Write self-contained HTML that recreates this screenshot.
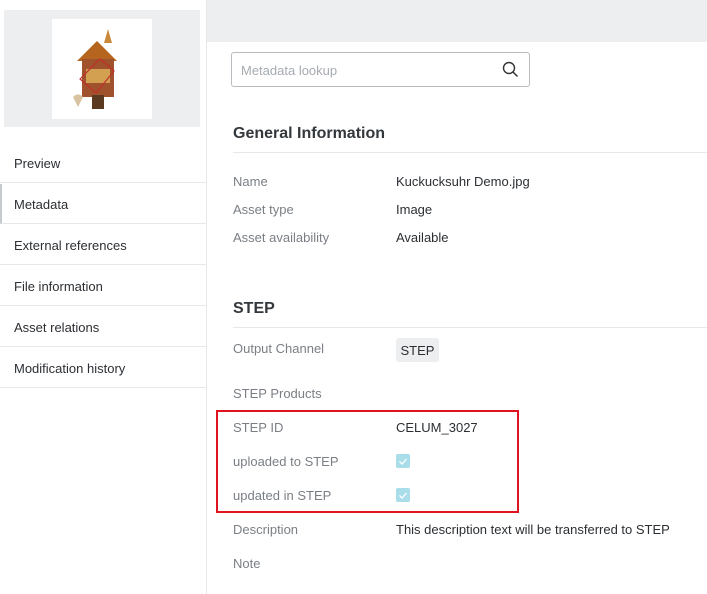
<!DOCTYPE html><html><head><style>
body{margin:0;width:707px;height:594px;position:relative;font-family:"Liberation Sans",sans-serif;font-size:13px;color:#2b2f33;background:#fff;overflow:hidden}
.a{position:absolute}
.side{left:0;top:0;width:206px;height:594px;border-right:1px solid #e6e8ea}
.nav{left:0;width:206px;height:40px;border-bottom:1px solid #e6e8ea;line-height:42px;padding-left:14px;box-sizing:border-box}
.l{left:233px;color:#7a7f85}
.v{left:396px}
.cb{left:396px;width:14px;height:14px;background:#a8dde9;border-radius:2px}
</style></head><body>
<div class="a side"></div>
<div class="a" style="left:4px;top:10px;width:196px;height:117px;background:#eceef0"></div>
<div class="a" style="left:52px;top:19px;width:100px;height:100px;background:#fff">
<svg width="100" height="100" viewBox="0 0 100 100">
<polygon points="25,42 45,22 65,42" fill="#b5651d"/>
<rect x="30" y="40" width="32" height="38" fill="#a0522d"/>
<rect x="34" y="50" width="24" height="14" fill="#d2a050"/>
<rect x="40" y="76" width="12" height="14" fill="#5a3a20"/>
<polygon points="56,10 60,24 52,24" fill="#c98a3a"/>
<path d="M28 60 L48 40 L62 52 L44 74 Z" fill="none" stroke="#c0302a" stroke-width="1.2"/>
<path d="M21 78 q5-5 10 0 l-5 10z" fill="#d9c2a0"/>
</svg></div>
<div class="a nav" style="top:143px">Preview</div>
<div class="a nav" style="top:184px;border-left:2px solid #c8cbce;padding-left:12px">Metadata</div>
<div class="a nav" style="top:225px">External references</div>
<div class="a nav" style="top:266px">File information</div>
<div class="a nav" style="top:307px">Asset relations</div>
<div class="a nav" style="top:348px">Modification history</div>
<div class="a" style="left:207px;top:0;width:500px;height:42px;background:#eceef0"></div>
<div class="a" style="left:231px;top:52px;width:299px;height:35px;border:1px solid #b8bcc0;border-radius:3px;box-sizing:border-box;line-height:35px;padding-left:9px;color:#a6abb0;font-size:13px">Metadata lookup</div>
<svg class="a" style="left:502px;top:61px" width="17" height="17" viewBox="0 0 17 17"><circle cx="7" cy="7" r="5.5" fill="none" stroke="#333" stroke-width="1.4"/><path d="M11 11l4.5 4.5" stroke="#333" stroke-width="1.5"/></svg>
<div class="a" style="left:233px;top:125px;font-size:16px;font-weight:bold;color:#33383d">General Information</div>
<div class="a" style="left:233px;top:152px;width:474px;height:1px;background:#e6e8ea"></div>
<div class="a l" style="top:174px">Name</div><div class="a v" style="top:174px">Kuckucksuhr Demo.jpg</div>
<div class="a l" style="top:202px">Asset type</div><div class="a v" style="top:202px">Image</div>
<div class="a l" style="top:230px">Asset availability</div><div class="a v" style="top:230px">Available</div>
<div class="a" style="left:233px;top:300px;font-size:16px;font-weight:bold;color:#33383d">STEP</div>
<div class="a" style="left:233px;top:327px;width:474px;height:1px;background:#e6e8ea"></div>
<div class="a l" style="top:341px">Output Channel</div>
<div class="a" style="left:396px;top:338px;width:43px;height:24px;background:#eceef0;border-radius:3px;text-align:center;line-height:25px">STEP</div>
<div class="a l" style="top:386px">STEP Products</div>
<div class="a l" style="top:420px">STEP ID</div><div class="a v" style="top:420px">CELUM_3027</div>
<div class="a l" style="top:454px">uploaded to STEP</div><div class="a cb" style="top:454px"><svg width="14" height="14"><path d="M3.5 7.5l2.5 2.5 4.5-5" fill="none" stroke="#fff" stroke-width="1.3"/></svg></div>
<div class="a l" style="top:488px">updated in STEP</div><div class="a cb" style="top:488px"><svg width="14" height="14"><path d="M3.5 7.5l2.5 2.5 4.5-5" fill="none" stroke="#fff" stroke-width="1.3"/></svg></div>
<div class="a" style="left:216px;top:410px;width:303px;height:103px;border:2px solid #e0141e;box-sizing:border-box"></div>
<div class="a l" style="top:522px">Description</div><div class="a v" style="top:522px">This description text will be transferred to STEP</div>
<div class="a l" style="top:556px">Note</div>
</body></html>
